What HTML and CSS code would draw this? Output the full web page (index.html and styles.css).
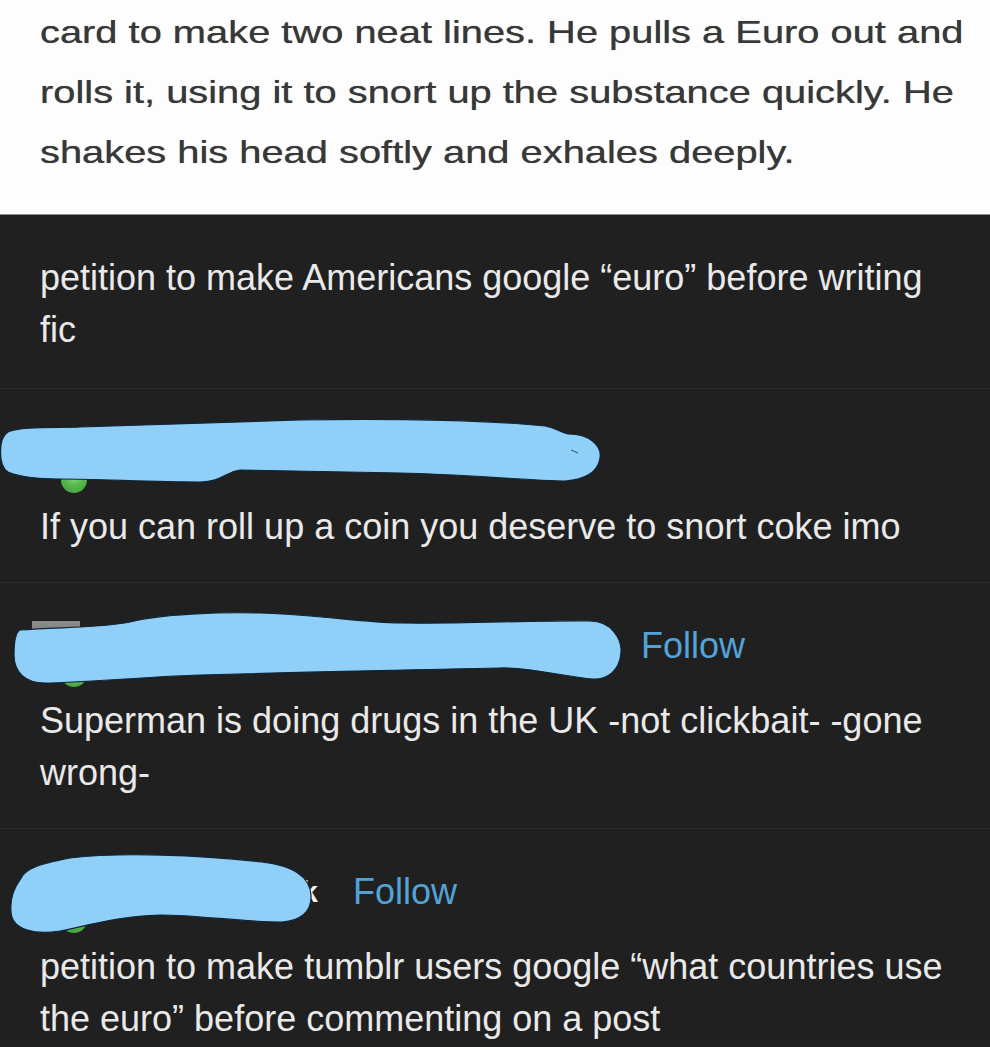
FILE: index.html
```html
<!DOCTYPE html>
<html lang="en">
<head>
<meta charset="utf-8">
<title>Thread</title>
<link rel="stylesheet" href="styles.css">
</head>
<body>
<div class="page">
  <section class="story">
    <p class="story-text">card to make two neat lines. He pulls a Euro out and rolls it, using it to snort up the substance quickly. He shakes his head softly and exhales deeply.</p>
  </section>

  <section class="reply reply-first">
    <p class="reply-text">petition to make Americans google “euro” before writing fic</p>
  </section>

  <section class="reply">
    <div class="reply-head">
      <div class="avatar avatar-plain"><span class="badge"></span></div>
      <span class="username name-one">redactedname</span>
    </div>
    <p class="reply-text">If you can roll up a coin you deserve to snort coke imo</p>
    <svg class="scribble" viewBox="0 389 990 120" aria-hidden="true">
      <path fill="#90cff7" stroke="#0f2536" stroke-width="1.2" d="M 8 432 C 20 426, 60 428, 80 427 L 300 420 C 400 418, 500 421, 545 426 C 556 428, 560 432, 568 434 C 590 434, 602 446, 600 458 C 598 472, 585 480, 565 481 C 520 480, 460 474, 400 473 L 240 470 C 225 472, 222 482, 200 482 C 150 482, 100 479, 60 479 C 40 479, 20 477, 8 472 C -2 466, -2 438, 8 432 Z"/>
      <path fill="none" stroke="#2a4a66" stroke-width="1" d="M 571 450 L 578 453"/>
    </svg>
  </section>

  <section class="reply">
    <div class="reply-head">
      <div class="avatar avatar-photo"><span class="badge"></span></div>
      <span class="username name-two">redactedusername</span>
      <a class="follow">Follow</a>
    </div>
    <p class="reply-text">Superman is doing drugs in the UK -not clickbait- -gone wrong-</p>
    <svg class="scribble" viewBox="0 583 990 120" aria-hidden="true">
      <path fill="#90cff7" stroke="#0f2536" stroke-width="1.2" d="M 20 630 C 60 627, 100 628, 130 622 C 160 614, 220 612, 260 613 C 320 615, 360 622, 400 623 C 460 624, 540 620, 590 621 C 612 621, 622 640, 621 652 C 620 670, 608 680, 592 679 C 560 676, 530 667, 500 668 C 440 669, 300 672, 200 675 C 140 677, 80 683, 45 683 C 25 683, 14 672, 14 655 C 14 640, 16 632, 20 630 Z"/>
    </svg>
  </section>

  <section class="reply">
    <div class="reply-head">
      <div class="avatar avatar-dark"><span class="badge"></span></div>
      <span class="username name-three">redactedblogk</span>
      <a class="follow">Follow</a>
    </div>
    <p class="reply-text">petition to make tumblr users google “what countries use the euro” before commenting on a post</p>
    <svg class="scribble" viewBox="0 829 990 120" aria-hidden="true">
      <path fill="#90cff7" stroke="#0f2536" stroke-width="1.2" d="M 20 880 C 25 868, 40 864, 70 858 C 120 852, 200 855, 262 862 C 295 866, 310 878, 311 895 C 312 912, 300 921, 282 922 C 240 922, 200 915, 160 915 C 120 916, 90 925, 60 931 C 35 935, 12 930, 11 912 C 10 900, 14 888, 20 880 Z"/>
    </svg>
  </section>
</div>
</body>
</html>
```

FILE: styles.css
```css
html, body {
  margin: 0;
  padding: 0;
}

body {
  background: #202020;
  font-family: "Liberation Sans", Arial, Helvetica, sans-serif;
}

.page {
  width: 990px;
  overflow: hidden;
}

.story {
  background: #fdfdfd;
  padding: 2px 0 32px 40px;
  border-bottom: 1px solid #8c8c8c;
}

.story-text {
  margin: 0;
  width: 775px;
  font-size: 32px;
  line-height: 60px;
  color: #383838;
  transform: scaleX(1.245);
  transform-origin: 0 0;
  text-shadow: 0 0 0.6px #555555;
}

.reply {
  position: relative;
  background: #202020;
  border-top: 1px solid #2c2c2c;
  padding: 20px 35px 29px 40px;
}

.reply-first {
  border-top: 0;
  padding-top: 37px;
  padding-bottom: 32px;
}

.reply-head {
  display: flex;
  align-items: center;
  height: 86px;
  margin: 0 0 6px -8px;
}

.avatar {
  position: relative;
  align-self: flex-start;
  flex: none;
  width: 48px;
  height: 52px;
  margin-top: 18px;
}

.avatar-plain {
  background: #1b1b1b;
}

.avatar-photo {
  background: linear-gradient(#8c8c8c, #5d5d5d);
}

.avatar-dark {
  background: #050505;
}

.badge {
  position: absolute;
  left: 29px;
  bottom: -14px;
  width: 26px;
  height: 26px;
  border-radius: 50%;
  background: radial-gradient(circle at 50% 35%, #8fdc84 0, #56b84c 45%, #3f9a37 100%);
}

.username {
  flex: none;
  margin-left: 16px;
  font-size: 30px;
  font-weight: bold;
  color: #f2f2f2;
  white-space: nowrap;
  overflow: hidden;
  text-align: right;
}

.name-one {
  width: 460px;
}

.name-two {
  width: 510px;
}

.name-three {
  width: 222px;
}

.follow {
  margin-left: 35px;
  font-size: 36px;
  color: #53a3d8;
}

.reply-text {
  margin: 0;
  font-size: 36px;
  line-height: 52px;
  color: #e9e9e9;
}

.scribble {
  position: absolute;
  left: 0;
  top: 0;
  width: 990px;
  height: 120px;
}
```
